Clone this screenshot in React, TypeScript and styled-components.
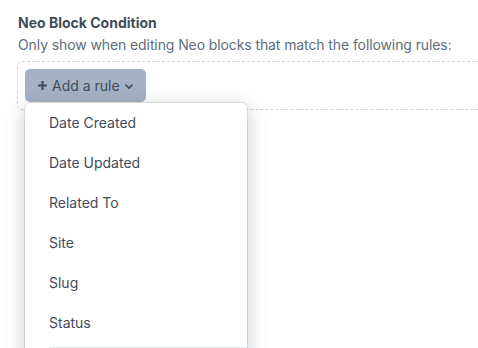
import { createGlobalStyle } from 'styled-components'
import styled from 'styled-components'

const GlobalStyle = createGlobalStyle`
  html, body {
    margin: 0;
    padding: 0;
    background: #ffffff;
  }
  body {
    font-family: Inter, "Noto Sans", sans-serif;
  }
`

const Page = styled.div`
  height: 348px;
  overflow: hidden;
`

const Field = styled.div`
  padding: 13px 0 0 18px;
  width: 500px;
`

const Heading = styled.div`
  font-size: 14px;
  font-weight: 700;
  line-height: 20px;
  color: #3f4d5a;
`

const Instructions = styled.div`
  font-size: 14px;
  line-height: 20px;
  margin-top: 2px;
  letter-spacing: -0.1px;
  color: #606d7b;
`

const ConditionBox = styled.div`
  position: relative;
  margin: 6px 0 0 -1px;
  padding: 7px;
  border: 1px dashed #cdd6df;
  border-radius: 5px;
`

const AddButton = styled.button`
  display: inline-flex;
  align-items: center;
  gap: 4px;
  height: 33px;
  padding: 0 12px;
  border: none;
  border-radius: 5px;
  background: #a4b2c4;
  color: #3f4d5a;
  font-family: inherit;
  font-size: 14px;
  cursor: pointer;
`

const Menu = styled.div`
  position: absolute;
  left: 7px;
  top: 41px;
  width: 222px;
  height: 260px;
  padding: 0 0 0 24px;
  box-sizing: border-box;
  background: #ffffff;
  border-radius: 5px;
  box-shadow: 0 0 0 1px rgba(31, 41, 51, 0.1), 0 5px 20px rgba(31, 41, 51, 0.25);
  z-index: 2;
`

const MenuItem = styled.div`
  height: 40px;
  box-sizing: border-box;
  padding-bottom: 2px;
  display: flex;
  align-items: center;
  font-size: 14px;
  color: #3f4d5a;
`

const Separator = styled.hr`
  margin: 4px 0 0;
  border: none;
  border-top: 1px solid #e3e7eb;
`

const PlusIcon = () => (
  <svg width="11" height="11" viewBox="0 0 11 11" aria-hidden>
    <path d="M5.5 1v9M1 5.5h9" stroke="#3f4d5a" strokeWidth="2.2" />
  </svg>
)

const ChevronIcon = () => (
  <svg width="10" height="8" viewBox="0 0 10 8" aria-hidden>
    <path d="M1.5 2.5L5 6l3.5-3.5" fill="none" stroke="#3f4d5a" strokeWidth="1.6" />
  </svg>
)

const rules = ['Date Created', 'Date Updated', 'Related To', 'Site', 'Slug', 'Status']

export default function App() {
  return (
    <Page>
      <GlobalStyle />
      <Field>
        <Heading>Neo Block Condition</Heading>
        <Instructions>
          Only show when editing Neo blocks that match the following rules:
        </Instructions>
        <ConditionBox>
          <AddButton>
            <PlusIcon />
            Add a rule
            <ChevronIcon />
          </AddButton>
          <Menu>
            {rules.map((rule) => (
              <MenuItem key={rule}>{rule}</MenuItem>
            ))}
            <Separator />
          </Menu>
        </ConditionBox>
      </Field>
    </Page>
  )
}
